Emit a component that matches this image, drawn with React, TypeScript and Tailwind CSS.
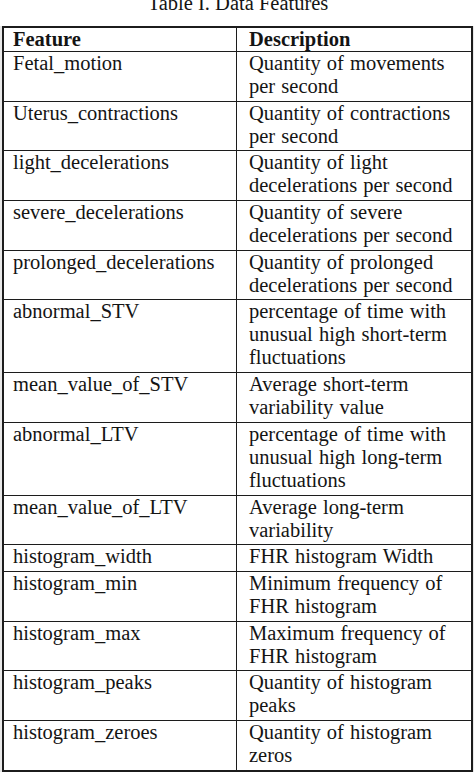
const rows: [string, string[]][] = [
  ["Fetal_motion", ["Quantity of movements", "per second"]],
  ["Uterus_contractions", ["Quantity of contractions", "per second"]],
  ["light_decelerations", ["Quantity of light", "decelerations per second"]],
  ["severe_decelerations", ["Quantity of severe", "decelerations per second"]],
  ["prolonged_decelerations", ["Quantity of prolonged", "decelerations per second"]],
  ["abnormal_STV", ["percentage of time with", "unusual high short-term", "fluctuations"]],
  ["mean_value_of_STV", ["Average short-term", "variability value"]],
  ["abnormal_LTV", ["percentage of time with", "unusual high long-term", "fluctuations"]],
  ["mean_value_of_LTV", ["Average long-term", "variability"]],
  ["histogram_width", ["FHR histogram Width"]],
  ["histogram_min", ["Minimum frequency of", "FHR histogram"]],
  ["histogram_max", ["Maximum frequency of", "FHR histogram"]],
  ["histogram_peaks", ["Quantity of histogram", "peaks"]],
  ["histogram_zeroes", ["Quantity of histogram", "zeros"]],
];

export default function App() {
  return (
    <div
      className="w-[474px] h-[772px] overflow-hidden bg-white text-[#141414] text-[20.5px] leading-[23px]"
      style={{ fontFamily: '"Liberation Serif", "Times New Roman", serif' }}
    >
      <div className="mt-[-8px] mb-[11px] text-center whitespace-nowrap pl-[2px]">Table I. Data Features</div>

      <div className="bg-[#e8e8e8] pl-[2px] pb-[3px]">
        <div className="w-[471px] border-2 border-[#1c1c1c] bg-white grid grid-cols-[233px_1fr]">
          <div className="border-r border-b border-[#1c1c1c] pl-[9px] font-bold">Feature</div>
          <div className="border-b border-[#1c1c1c] pl-[12px] font-bold">Description</div>
          {rows.map(([name, lines], i) => {
            const last = i === rows.length - 1;
            return [
              <div
                key={name + "-f"}
                className={`border-r border-[#1c1c1c] pl-[9px] pb-[2.7px] whitespace-nowrap ${last ? "" : "border-b"}`}
              >
                {name}
              </div>,
              <div
                key={name + "-d"}
                className={`border-[#1c1c1c] pl-[12px] pb-[2.7px] [word-spacing:1px] ${last ? "" : "border-b"}`}
              >
                {lines.map((l) => (
                  <div key={l} className="whitespace-nowrap">
                    {l}
                  </div>
                ))}
              </div>,
            ];
          })}
        </div>
      </div>
    </div>
  );
}
